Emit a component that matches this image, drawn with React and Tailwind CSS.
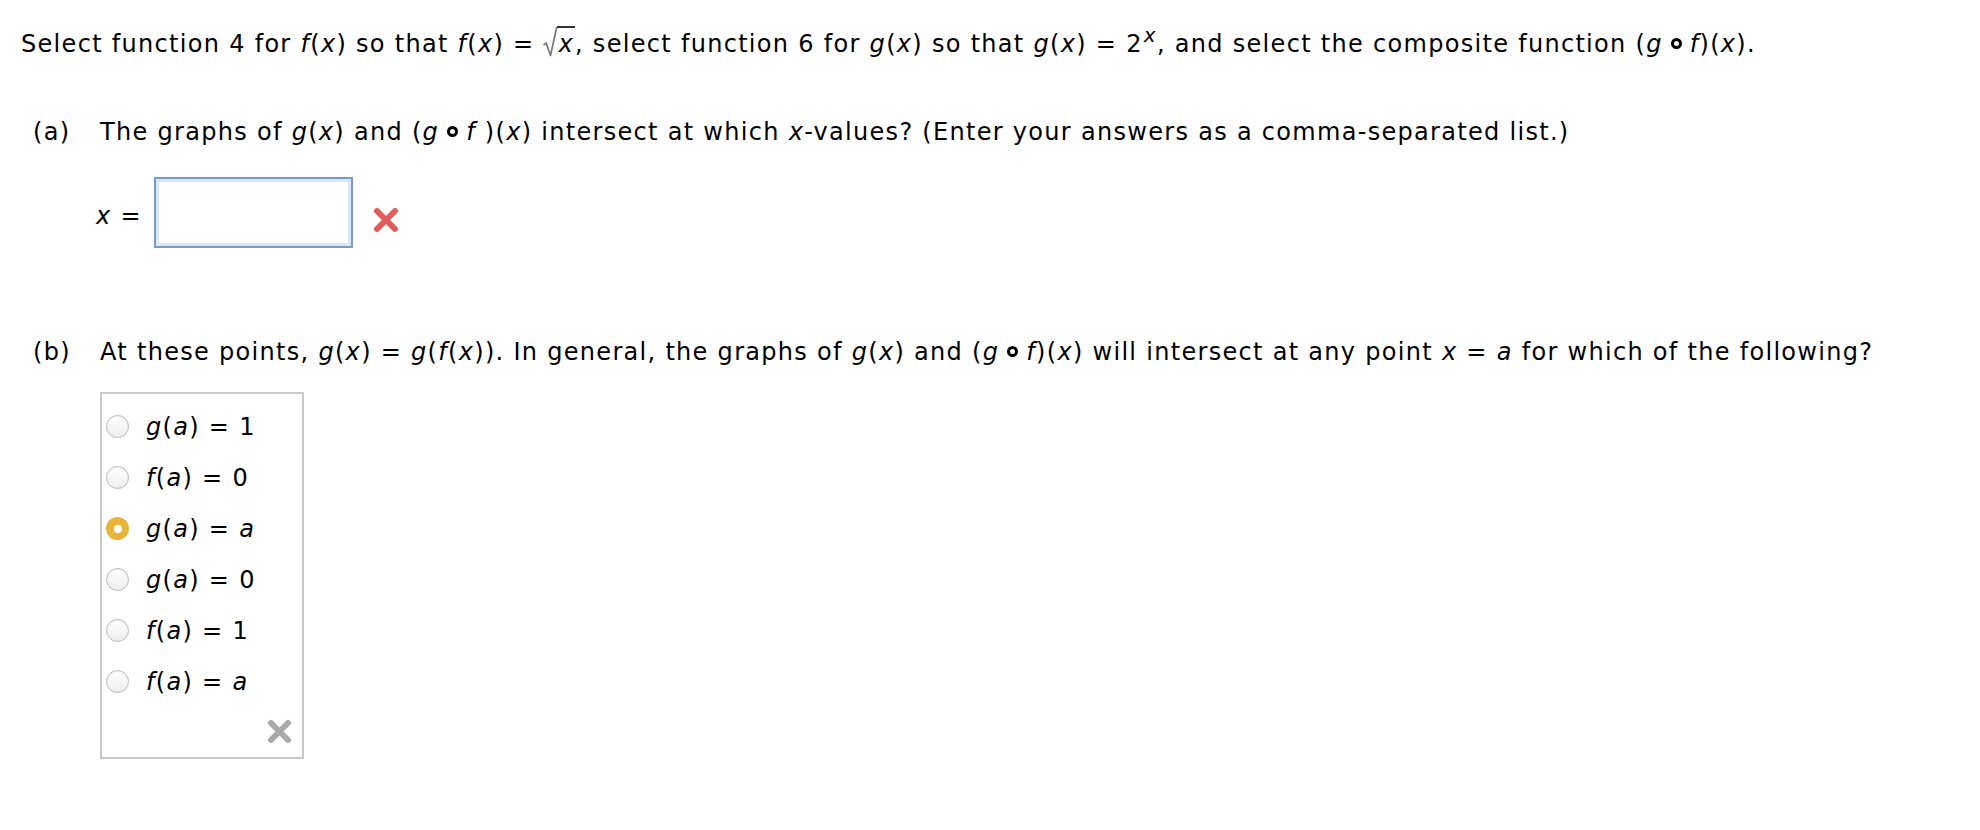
import React from "react";

const I = ({ children }) => <i className="italic">{children}</i>;

const Comp = () => (
  <span className="inline-block w-[11px] h-[11px] rounded-full border-[3px] border-black mx-[8px] align-[3px]" />
);

const Sqrt = () => (
  <span className="relative inline-block pl-[15px] pr-[1px]">
    <svg
      className="absolute left-0 top-[-3px]"
      width="15"
      height="31"
      viewBox="0 0 15 31"
    >
      <path
        d="M0.5 19 L3.2 17 L7.5 29.5 L13.8 1"
        fill="none"
        stroke="#777"
        strokeWidth="1.7"
        strokeLinejoin="round"
      />
    </svg>
    <span className="absolute left-[14px] right-0 top-[-3px] h-[2px] bg-[#333]" />
    <I>x</I>
  </span>
);

const RedX = () => (
  <svg width="28" height="26" viewBox="0 0 28 26">
    <path
      d="M5 4 L23 22 M23 4 L5 22"
      stroke="#e25c5c"
      strokeWidth="6"
      strokeLinecap="round"
      fill="none"
    />
  </svg>
);

const GrayX = () => (
  <svg width="25" height="25" viewBox="0 0 25 25">
    <path
      d="M4 4 L21 21 M21 4 L4 21"
      stroke="#a9a9a9"
      strokeWidth="6"
      strokeLinecap="round"
      fill="none"
    />
  </svg>
);

const Radio = ({ checked }) =>
  checked ? (
    <span className="w-[23px] h-[23px] rounded-full bg-[#e8b53b] flex items-center justify-center shrink-0">
      <span className="w-[8px] h-[8px] rounded-full bg-white" />
    </span>
  ) : (
    <span className="w-[23px] h-[23px] rounded-full border border-[#b9b9b9] bg-gradient-to-b from-white to-[#ededed] shadow-[inset_0_1px_1px_rgba(0,0,0,0.06)] shrink-0" />
  );

const options = [
  { f: "g", rhs: <span>1</span> },
  { f: "f", rhs: <span>0</span> },
  { f: "g", rhs: <I>a</I>, checked: true },
  { f: "g", rhs: <span>0</span> },
  { f: "f", rhs: <span>1</span> },
  { f: "f", rhs: <I>a</I> },
];

export default function App() {
  return (
    <div className="w-[1980px] h-[830px] bg-white text-black font-['Verdana','DejaVu_Sans',sans-serif] text-[24px] leading-[30px] tracking-[1.3px] overflow-hidden">
      <div className="pt-[29px] pl-[21px] whitespace-nowrap">
        Select function 4 for <I>f</I>(<I>x</I>) so that <I>f</I>(<I>x</I>) ={" "}
        <Sqrt />, select function 6 for <I>g</I>(<I>x</I>) so that <I>g</I>(
        <I>x</I>) = 2
        <sup className="text-[20px] ml-[1px]">
          <I>x</I>
        </sup>
        , and select the composite function (<I>g</I>
        <Comp />
        <I>f</I>)(<I>x</I>).
      </div>

      <div className="mt-[58px] flex whitespace-nowrap">
        <div className="w-[100px] pl-[33px]">(a)</div>
        <div>
          The graphs of <I>g</I>(<I>x</I>) and (<I>g</I>
          <Comp />
          <I>f</I> )(<I>x</I>) intersect at which <I>x</I>-values? (Enter your
          answers as a comma-separated list.)
        </div>
      </div>

      <div className="mt-[30px] flex items-start pl-[96px]">
        <div className="mt-[24px] w-[58px]">
          <I>x</I> =
        </div>
        <div className="w-[199px] h-[71px] border-2 border-[#7a9cc4] shadow-[inset_0_0_0_3px_#dbe7f8] bg-white" />
        <div className="ml-[19px] mt-[30px]">
          <RedX />
        </div>
      </div>

      <div className="mt-[89px] flex whitespace-nowrap">
        <div className="w-[100px] pl-[33px]">(b)</div>
        <div>
          At these points, <I>g</I>(<I>x</I>) = <I>g</I>(<I>f</I>(<I>x</I>)). In
          general, the graphs of <I>g</I>(<I>x</I>) and (<I>g</I>
          <Comp />
          <I>f</I>)(<I>x</I>) will intersect at any point <I>x</I> = <I>a</I> for
          which of the following?
        </div>
      </div>

      <div className="ml-[100px] mt-[25px] w-[204px] h-[367px] border-2 border-[#c8c8c8] pt-[7px] flex flex-col">
        {options.map((o, i) => (
          <div key={i} className="h-[51px] flex items-center pl-[4px]">
            <Radio checked={o.checked} />
            <span className="ml-[17px] whitespace-nowrap">
              <I>{o.f}</I>(<I>a</I>) = {o.rhs}
            </span>
          </div>
        ))}
        <div className="flex justify-end pr-[10px] mt-[12px]">
          <GrayX />
        </div>
      </div>
    </div>
  );
}
